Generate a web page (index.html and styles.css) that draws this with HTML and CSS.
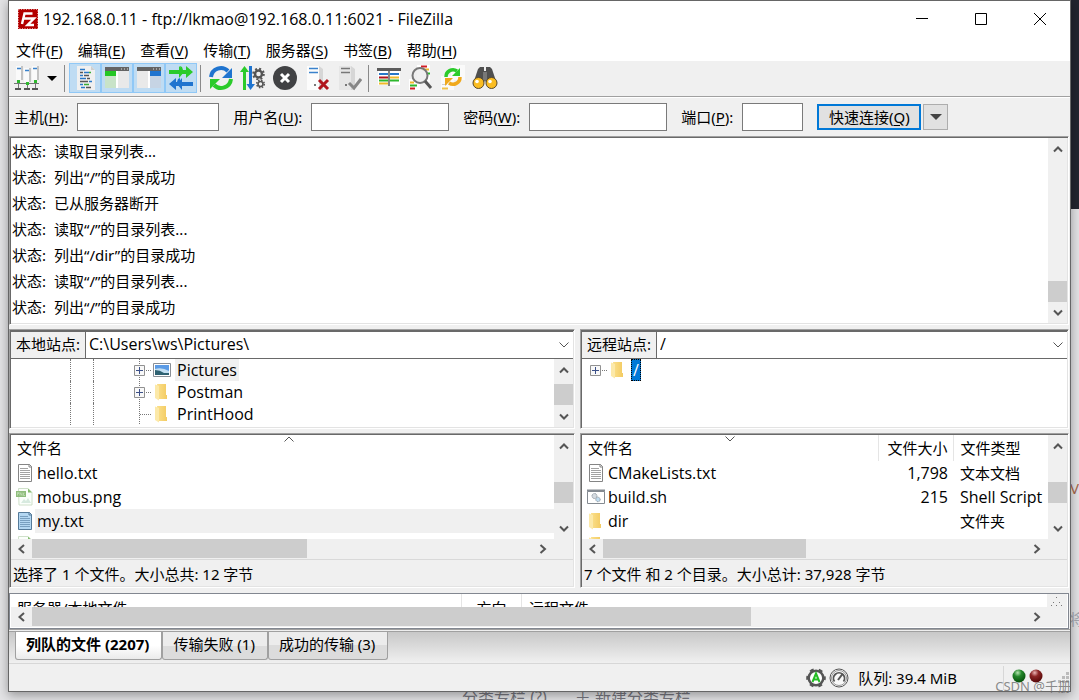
FILE: index.html
```html
<!DOCTYPE html>
<html lang="zh-CN">
<head>
    <meta charset="UTF-8">
    <meta name="viewport" content="width=device-width, initial-scale=1.0">
    <title>FileZilla</title>
    <link rel="stylesheet" href="styles.css">
</head>
<body>
    <!-- Shared icons -->
    <svg class="sprite" aria-hidden="true">
        <linearGradient id="folderFill" x1="0" x2="1"><stop offset="0" stop-color="#fbe08c"/><stop offset="1" stop-color="#f3cb62"/></linearGradient>
        <radialGradient id="ledGreen" cx=".4" cy=".25" r=".75"><stop offset="0" stop-color="#b5e5b0"/><stop offset=".4" stop-color="#23862a"/><stop offset="1" stop-color="#064f0b"/></radialGradient>
        <radialGradient id="ledRed" cx=".4" cy=".25" r=".75"><stop offset="0" stop-color="#eab5b5"/><stop offset=".4" stop-color="#8c2626"/><stop offset="1" stop-color="#550808"/></radialGradient>
        <symbol id="arrow-up" viewBox="0 0 10 10"><path d="M1 7.5 5 3.5 9 7.5" fill="none" stroke="#555" stroke-width="2"/></symbol>
        <symbol id="arrow-down" viewBox="0 0 10 10"><path d="M1 2.5 5 6.5 9 2.5" fill="none" stroke="#555" stroke-width="2"/></symbol>
        <symbol id="arrow-left" viewBox="0 0 10 10"><path d="M7 1 2.5 5 7 9" fill="none" stroke="#555" stroke-width="2"/></symbol>
        <symbol id="arrow-right" viewBox="0 0 10 10"><path d="M2.5 1 7 5 2.5 9" fill="none" stroke="#555" stroke-width="2"/></symbol>
        <symbol id="chevron-down" viewBox="0 0 10 6"><path d="M.5.5 5 5 9.5.5" fill="none" stroke="#555"/></symbol>
        <symbol id="chevron-up" viewBox="0 0 10 6"><path d="M.5 5.5 5 1 9.5 5.5" fill="none" stroke="#555"/></symbol>
        <symbol id="folder" viewBox="0 0 18 18"><path d="M4 1h9v11h1v4H5z" fill="url(#folderFill)"/><path d="M2 1.5 6 3v14.500L2 15z" fill="#fce9a9"/></symbol>
        <symbol id="text-file" viewBox="0 0 18 20"><path d="M2.500 1.500h11l2 2v15h-13z" fill="#fff" stroke="#858585"/><path d="M13 1v3h3" fill="none" stroke="#858585"/><path d="M4 5.500h8M4 7.500h10M4 9.500h10M4 11.500h10M4 13.500h10M4 15.500h10" stroke="#a2a2a2"/></symbol>
        <symbol id="text-file-on" viewBox="0 0 18 20"><path d="M2.500 1.500h11l2 2v15h-13z" fill="#b3d7f2" stroke="#557a99"/><path d="M13 1v3h3" fill="none" stroke="#557a99"/><path d="M4 5.500h8M4 7.500h10M4 9.500h10M4 11.500h10M4 13.500h10M4 15.500h10" stroke="#789fbf"/></symbol>
        <symbol id="png-file" viewBox="0 0 18 20"><path d="M2.500 1.500h9.500l4 4V18H3z" fill="#fbfffb" stroke="#cfe0ca"/><path d="M12 1.500v4h4z" fill="#85bb6e"/><path d="M0 4h10v6H0z" fill="#8fbd7c"/><path d="M1.500 8.500v-3h1v1.500M4 8.500v-3l2 3v-3M8.500 6h-1v2.500h1.500" fill="none" stroke="#c3dfb8" stroke-width=".8"/><path d="m5 16 3-4 2 2 2-3 3 5z" fill="#d7eadf"/></symbol>
        <symbol id="plus-box" viewBox="0 0 24 22"><path d="M.5.5h10v10H.5z" transform="translate(6 6)" fill="#f8f8f8" stroke="#919191"/><path d="M8 11.500h7M11.500 8v7" stroke="#3c5088"/><path d="M18 11.500h6" stroke="#777" stroke-dasharray="1 1"/></symbol>
    </svg>

    <div class="page-behind">
        <div class="dark-strip"></div>
        <span class="side-text">VI</span>
        <span class="side-text side-text-low">将</span>
        <p class="behind-line"><span>分类专栏 (?)</span><span>＋ 新建分类专栏</span></p>
    </div>

    <main class="window">
        <header class="title-bar">
            <svg class="app-icon" viewBox="0 0 20 20"><path d="M0 0h20v20H0z" fill="#b30000"/><path d="M.5.5h19v19H.5z" fill="none" stroke="#fff" stroke-dasharray="1 1.500" stroke-opacity=".6"/><path d="M4 15 6.500 4.500h8M5.500 9.500h5M10 9.500h6L9.500 16h6.500" fill="none" stroke="#fff" stroke-width="2.400"/></svg>
            <h1>192.168.0.11 - ftp://lkmao@192.168.0.11:6021 - FileZilla</h1>
            <button class="caption" aria-label="最小化"><svg width="12" height="12"><path d="M0 5.500h12" stroke="#000"/></svg></button>
            <button class="caption" aria-label="最大化"><svg width="12" height="12"><path d="M.5.5h11v11H.5z" fill="none" stroke="#000"/></svg></button>
            <button class="caption" aria-label="关闭"><svg width="12" height="12"><path d="M0 0l12 12M12 0 0 12" stroke="#000"/></svg></button>
        </header>

        <nav class="menu-bar">
            <button>文件(<u>F</u>)</button>
            <button>编辑(<u>E</u>)</button>
            <button>查看(<u>V</u>)</button>
            <button>传输(<u>T</u>)</button>
            <button>服务器(<u>S</u>)</button>
            <button>书签(<u>B</u>)</button>
            <button>帮助(<u>H</u>)</button>
        </nav>

        <div class="toolbar">
            <button class="tool" aria-label="站点管理器">
                <svg width="26" height="26" viewBox="0 0 26 26"><path d="M2 1h5v14H2zM10 3h5v14h-5zM18 1h5v14h-5z" fill="#fafafa"/><path d="M7 1h2v14H7zM15 3h2v14h-2zM23 1h2v14h-2z" fill="#c4c4c4"/><path d="M3 3.500h4M11 5.500h4M19 3.500h4" stroke="#3a82cc" stroke-width="1.500"/><path d="M4.500 15v8M13.500 17v7M21.500 15v8M0 18.500h25" stroke="#777"/><path d="M1 24h6M10 24h6M18 24h6" stroke="#555" stroke-width="2"/><path d="M3 15h3v3H3zM12 17h3v3h-3zM20 15h3v3h-3z" fill="#2eb82e"/></svg>
            </button>
            <button class="tool tool-arrow" aria-label="打开站点列表"><svg width="10" height="5"><path d="M0 0h10L5 5z" fill="#000"/></svg></button>
            <span class="tool-line"></span>
            <button class="tool pressed" aria-label="消息日志">
                <svg width="26" height="26" viewBox="0 0 26 26"><path d="M5 1h14l4 4v20H5z" fill="#f0f0f0"/><path d="M19 1v4h4z" fill="#cfcfcf"/><g stroke-width="1.300"><path d="M8 4.500h5M12 7.500h5M8 10.500h3M8 13.500h6M17 16.500h3M8 19.500h3M9 22.500h4" stroke="#2878c8"/><path d="M8 7.500h3M12 10.500h5M15 13.500h3M8 16.500h8M14 22.500h5" stroke="#555"/><path d="M17 7.500h2M12 19.500h5" stroke="#37ad37"/></g></svg>
            </button>
            <button class="tool pressed" aria-label="本地目录树">
                <svg width="26" height="26" viewBox="0 0 26 26"><path d="M1 2h24v4H1z" fill="#646464"/><path d="M17 4h1M20 4h1M23 4h1" stroke="#ddd"/><path d="M1 6h11v5H1z" fill="#24c724"/><path d="M1 11h11v12H1z" fill="#c8e3c8"/><path d="M12 6h2v17h-2z" fill="#fff"/><path d="M14 6h11v17H14z" fill="#e9e9e9"/></svg>
            </button>
            <button class="tool pressed" aria-label="远程目录树">
                <svg width="26" height="26" viewBox="0 0 26 26"><path d="M1 2h24v4H1z" fill="#646464"/><path d="M17 4h1M20 4h1M23 4h1" stroke="#ddd"/><path d="M1 6h11v17H1z" fill="#e9e9e9"/><path d="M12 6h2v17h-2z" fill="#fff"/><path d="M14 6h11v5H14z" fill="#1f74cf"/><path d="M14 11h11v12H14z" fill="#c6d4e4"/></svg>
            </button>
            <button class="tool pressed" aria-label="传输队列">
                <svg width="26" height="26" viewBox="0 0 26 26"><path d="M1 5h10V1l5 6-5 6V9H1zM13 5l-1-4 2 1 1 3h3V1l7 6-7 6V9h-4z" fill="#2bcb2b"/><path d="M25 17H14v-4l-5 6 5 6v-4h11zM12 17v-4l-2 1-1 3H8v-4l-7 6 7 6v-4h3z" fill="#1f74cf"/></svg>
            </button>
            <span class="tool-line"></span>
            <button class="tool" aria-label="刷新">
                <svg width="26" height="26" viewBox="0 0 26 26"><path d="M3 12a10 10 0 0 1 17-6" fill="none" stroke="#1f74cf" stroke-width="4"/><path d="M24 3v10H14z" fill="#1f74cf"/><path d="M23 14a10 10 0 0 1-17 6" fill="none" stroke="#2bcb2b" stroke-width="4"/><path d="M2 24V14h10z" fill="#2bcb2b"/></svg>
            </button>
            <button class="tool" aria-label="处理队列">
                <svg width="26" height="26" viewBox="0 0 26 26"><path d="M4.500 25V5" stroke-width="3" stroke="#2bcb2b"/><path d="M0 7 4.500 1 9 7z" fill="#2bcb2b"/><path d="M10.500 1v20" stroke-width="3" stroke="#1f74cf"/><path d="M6.500 19 10.500 25 15 19z" fill="#1f74cf"/><circle cx="18.500" cy="9" r="3.500" fill="none" stroke="#555" stroke-width="2.500"/><circle cx="18.500" cy="9" r="5.300" fill="none" stroke="#555" stroke-width="2" stroke-dasharray="2 2.160"/><circle cx="20.500" cy="19" r="2.500" fill="none" stroke="#555" stroke-width="1.600"/><circle cx="20.500" cy="19" r="3.800" fill="none" stroke="#555" stroke-width="1.500" stroke-dasharray="1.500 1.500"/></svg>
            </button>
            <button class="tool" aria-label="取消">
                <svg width="26" height="26" viewBox="0 0 26 26"><circle cx="13" cy="13" r="12" fill="#414244"/><path d="m9 9 8 8M17 9l-8 8" stroke="#fff" stroke-width="3"/></svg>
            </button>
            <button class="tool" aria-label="断开">
                <svg width="26" height="26" viewBox="0 0 26 26"><path d="M3 1h12v24H3z" fill="#fcfcfc"/><path d="M15 1l4 3v21h-4z" fill="#d6d6d6"/><path d="M5 3.500h9M5 7.500h9" stroke="#3a82cc" stroke-width="1.500"/><path d="M10 19h2v2h-2z" fill="#777"/><path d="m15 15 9 9M24 15l-9 9" stroke="#b0151d" stroke-width="3"/></svg>
            </button>
            <button class="tool" aria-label="重新连接">
                <svg width="26" height="26" viewBox="0 0 26 26"><path d="M3 1h12v24H3z" fill="#e6e6e6"/><path d="M15 1l4 3v21h-4z" fill="#d6d6d6"/><path d="M5 3.500h9M5 7.500h9" stroke="#777" stroke-width="1.500"/><path d="M9 19h2v2H9z" fill="#777"/><path d="m13 18 5 5 7-9" fill="none" stroke="#868686" stroke-width="3"/></svg>
            </button>
            <span class="tool-line"></span>
            <button class="tool" aria-label="目录列表过滤器">
                <svg width="26" height="26" viewBox="0 0 26 26"><path d="M2 6h22v14H2z" fill="#fff"/><path d="M1 3h24v3H1z" fill="#5c5c5c"/><path d="M3 9h9M14 9h9" stroke="#2878c8" stroke-width="2"/><path d="M3 15.500h9M14 15.500h9" stroke="#2eb82e" stroke-width="2"/><path d="M3 12.500h9" stroke="#b0151d" stroke-width="2"/><path d="M3 18.500h9M14 12.500h9" stroke="#f0b929" stroke-width="2"/><path d="M13 5v16" stroke="#5c5c5c" stroke-width="1.500"/></svg>
            </button>
            <button class="tool" aria-label="目录比较">
                <svg width="26" height="26" viewBox="0 0 26 26"><path d="M9 0h13v17H9zM1 14h11v11H1z" fill="#fff"/><path d="M13 1.500h6" stroke="#d21f26" stroke-width="2"/><path d="M14 4.500h7" stroke="#f0b929" stroke-width="2"/><path d="M18 8.500h4" stroke="#2eb82e" stroke-width="2"/><path d="M2 17.500h4" stroke="#f0b929" stroke-width="2"/><path d="M2 20.500h7" stroke="#2eb82e" stroke-width="2"/><path d="M2 23.500h5" stroke="#d21f26" stroke-width="2"/><circle cx="12" cy="10.500" r="7.500" fill="#ededed" fill-opacity=".85" stroke="#777" stroke-width="2"/><path d="m17 16 6 7" stroke="#555" stroke-width="3"/></svg>
            </button>
            <button class="tool" aria-label="同步浏览">
                <svg width="26" height="26" viewBox="0 0 26 26"><path d="M11 0h14v15H11zM1 11h13v14H1z" fill="#fafafa"/><path d="M2 19.500h5M15 19.500h2" stroke="#ccc"/><path d="M2 23.500h6" stroke="#f0c24a" stroke-width="2"/><path d="M6 12a7 7 0 0 1 11-6" fill="none" stroke="#2bcb2b" stroke-width="3.500"/><path d="M20 3v8h-8z" fill="#2bcb2b"/><path d="M20 12a7 7 0 0 1-11 6" fill="none" stroke="#f0a91c" stroke-width="3.500"/><path d="M5 21v-8h8z" fill="#f0a91c"/></svg>
            </button>
            <button class="tool" aria-label="查找文件">
                <svg width="26" height="26" viewBox="0 0 26 26"><path d="M8 2h4v4h2V2h4l2 2 4 12-9 4-2-5-2 5-9-4L6 4z" fill="#4f4f4f"/><path d="M11 7h4v8h-4z" fill="#777"/><circle cx="6.500" cy="18" r="5.500" fill="#fbbd22" stroke="#5a4a2c"/><circle cx="19.500" cy="18" r="5.500" fill="#fbbd22" stroke="#5a4a2c"/><circle cx="5" cy="16.500" r="1.800" fill="#fff"/><circle cx="18" cy="16.500" r="1.800" fill="#fff"/></svg>
            </button>
        </div>

        <form class="quick-connect">
            <label for="host">主机(<u>H</u>):</label>
            <input type="text" id="host" class="host">
            <label for="user">用户名(<u>U</u>):</label>
            <input type="text" id="user">
            <label for="pass">密码(<u>W</u>):</label>
            <input type="password" id="pass">
            <label for="port">端口(<u>P</u>):</label>
            <input type="text" id="port" class="port">
            <button type="button" class="connect">快速连接(<u>Q</u>)</button>
            <button type="button" class="history" aria-label="历史记录"><svg width="12" height="6"><path d="M0 0h12L6 6z" fill="#444"/></svg></button>
        </form>

        <section class="pane log">
            <dl>
                <dt>状态:</dt><dd>读取目录列表...</dd>
                <dt>状态:</dt><dd>列出“/”的目录成功</dd>
                <dt>状态:</dt><dd>已从服务器断开</dd>
                <dt>状态:</dt><dd>读取“/”的目录列表...</dd>
                <dt>状态:</dt><dd>列出“/dir”的目录成功</dd>
                <dt>状态:</dt><dd>读取“/”的目录列表...</dd>
                <dt>状态:</dt><dd>列出“/”的目录成功</dd>
            </dl>
            <div class="vscroll at-end">
                <button aria-label="向上"><svg><use href="#arrow-up"/></svg></button>
                <div class="track"><div class="thumb"></div></div>
                <button aria-label="向下"><svg><use href="#arrow-down"/></svg></button>
            </div>
        </section>

        <div class="sites">
            <section class="pane site">
                <div class="site-path">
                    <label for="localPath">本地站点:</label>
                    <div class="combo">
                        <select id="localPath"><option>C:\Users\ws\Pictures\</option></select>
                        <svg><use href="#chevron-down"/></svg>
                    </div>
                </div>
                <div class="pane-body">
                    <ul class="tree local-tree">
                        <li><i class="guide"></i><i class="guide guide-near"></i><span class="node line-full"><svg><use href="#plus-box"/></svg></span>
                            <svg class="tree-icon" viewBox="0 0 18 18"><path d="M.5 2.500h17v13H.5z" fill="#fff" stroke="#8a8f96"/><path d="M2 4h14v10H2z" fill="#5b9be6"/><path d="M2 8q7-2 14 2v4H2z" fill="#c3dff2"/><path d="M2 9q5 0 9 3h5v2H2z" fill="#2f6272"/></svg>
                            <span class="tree-name current">Pictures</span></li>
                        <li><i class="guide"></i><i class="guide guide-near"></i><span class="node line-full"><svg><use href="#plus-box"/></svg></span><svg class="tree-icon"><use href="#folder"/></svg><span class="tree-name">Postman</span></li>
                        <li><i class="guide"></i><i class="guide guide-near"></i><span class="node line-full"><svg viewBox="0 0 24 22"><path d="M12 11.500h12" stroke="#777" stroke-dasharray="1 1"/></svg></span><svg class="tree-icon"><use href="#folder"/></svg><span class="tree-name">PrintHood</span></li>
                    </ul>
                    <div class="vscroll tree-scroll">
                        <button aria-label="向上"><svg><use href="#arrow-up"/></svg></button>
                        <div class="track"><div class="thumb"></div></div>
                        <button aria-label="向下"><svg><use href="#arrow-down"/></svg></button>
                    </div>
                </div>
            </section>

            <section class="pane site">
                <div class="site-path">
                    <label for="remotePath">远程站点:</label>
                    <div class="combo">
                        <select id="remotePath"><option>/</option></select>
                        <svg><use href="#chevron-down"/></svg>
                    </div>
                </div>
                <div class="pane-body">
                    <ul class="tree remote-tree">
                        <li><span class="node"><svg><use href="#plus-box"/></svg></span><svg class="tree-icon"><use href="#folder"/></svg><span class="tree-name selected">/</span></li>
                    </ul>
                </div>
            </section>

            <section class="pane files">
                <div class="pane-body">
                    <div class="list">
                        <table class="local-files">
                            <thead><tr><th><svg class="sort"><use href="#chevron-up"/></svg>文件名</th></tr></thead>
                            <tbody>
                                <tr><td><div class="file"><svg><use href="#text-file"/></svg><span>hello.txt</span></div></td></tr>
                                <tr><td><div class="file"><svg><use href="#png-file"/></svg><span>mobus.png</span></div></td></tr>
                                <tr><td><div class="file current"><svg><use href="#text-file-on"/></svg><span>my.txt</span></div></td></tr>
                                <tr><td><div class="file"><svg><use href="#png-file"/></svg></div></td></tr>
                            </tbody>
                        </table>
                    </div>
                    <div class="vscroll list-scroll">
                        <button aria-label="向上"><svg><use href="#arrow-up"/></svg></button>
                        <div class="track"><div class="thumb"></div></div>
                        <button aria-label="向下"><svg><use href="#arrow-down"/></svg></button>
                    </div>
                </div>
                <div class="hscroll">
                    <button aria-label="向左"><svg><use href="#arrow-left"/></svg></button>
                    <div class="track"><div class="thumb" style="width: 55%"></div></div>
                    <button aria-label="向右"><svg><use href="#arrow-right"/></svg></button>
                </div>
                <p class="summary">选择了 1 个文件。大小总共: 12 字节</p>
            </section>

            <section class="pane files">
                <div class="pane-body">
                    <div class="list">
                        <table class="remote-files">
                            <thead><tr><th><svg class="sort"><use href="#chevron-down"/></svg>文件名</th><th class="size">文件大小</th><th class="type">文件类型</th></tr></thead>
                            <tbody>
                                <tr><td><div class="file"><svg><use href="#text-file"/></svg><span>CMakeLists.txt</span></div></td><td class="size latin">1,798</td><td class="type">文本文档</td></tr>
                                <tr><td><div class="file"><svg viewBox="0 0 18 20"><path d="M.5 4.500h17v12H.5z" fill="#fff" stroke="#848a91"/><path d="M0 3.500h18" stroke="#848a91" stroke-width="2"/><circle cx="7.500" cy="9" r="2.500" fill="#d5dbe1" stroke="#8b949d" stroke-dasharray="1 .5"/><circle cx="11" cy="12.500" r="2.200" fill="#bfdcf0" stroke="#8b949d" stroke-dasharray="1 .5"/></svg><span>build.sh</span></div></td><td class="size latin">215</td><td class="type latin">Shell Script</td></tr>
                                <tr><td><div class="file"><svg><use href="#folder"/></svg><span>dir</span></div></td><td class="size"></td><td class="type">文件夹</td></tr>
                                <tr><td><div class="file"><svg><use href="#folder"/></svg></div></td><td class="size"></td><td class="type"></td></tr>
                            </tbody>
                        </table>
                    </div>
                    <div class="vscroll list-scroll">
                        <button aria-label="向上"><svg><use href="#arrow-up"/></svg></button>
                        <div class="track"><div class="thumb"></div></div>
                        <button aria-label="向下"><svg><use href="#arrow-down"/></svg></button>
                    </div>
                </div>
                <div class="hscroll">
                    <button aria-label="向左"><svg><use href="#arrow-left"/></svg></button>
                    <div class="track"><div class="thumb" style="width: 48%"></div></div>
                    <button aria-label="向右"><svg><use href="#arrow-right"/></svg></button>
                </div>
                <p class="summary">7 个文件 和 2 个目录。大小总计: 37,928 字节</p>
            </section>
        </div>

        <section class="queue">
            <div class="queue-head">
                <span class="queue-server">服务器/本地文件</span>
                <span class="queue-way">方向</span>
                <span class="queue-remote">远程文件</span>
                <svg class="queue-corner" width="20" height="13"><path d="M9 3h1v1H9zM6 8h1v1H6zM12 8h1v1h-1zM4 11h1v1H4zM9 11h1v1H9zM14 11h1v1h-1z" fill="#777"/></svg>
            </div>
            <div class="hscroll">
                <button aria-label="向左"><svg><use href="#arrow-left"/></svg></button>
                <div class="track"><div class="thumb" style="width: 72.3%"></div></div>
                <button aria-label="向右"><svg><use href="#arrow-right"/></svg></button>
            </div>
        </section>

        <div class="tabs">
            <button class="tab active">列队的文件 (2207)</button>
            <button class="tab">传输失败 (1)</button>
            <button class="tab">成功的传输 (3)</button>
        </div>

        <footer class="status-bar">
            <svg width="20" height="20" viewBox="0 0 20 20"><circle cx="10" cy="10" r="7.300" fill="#fff" stroke="#555" stroke-width="2.500"/><circle cx="10" cy="10" r="8.800" fill="none" stroke="#555" stroke-width="2" stroke-dasharray="4 5.210" stroke-dashoffset="2"/><path d="m6.500 14 3.500-8.500 3.500 8.500M8 11.500h4" fill="none" stroke="#24bd24" stroke-width="2"/></svg>
            <svg width="20" height="20" viewBox="0 0 20 20"><circle cx="10" cy="10" r="9" fill="#f8f8f8" stroke="#555"/><circle cx="10" cy="10" r="7.500" fill="none" stroke="#999"/><path d="M5.500 13.500A5.500 5.500 0 1 1 14.500 13.500" fill="none" stroke="#555" stroke-width="1.800"/><path d="m9 12 4.500-6" stroke="#555" stroke-width="2"/></svg>
            <span class="queue-size">队列: 39.4 MiB</span>
            <div class="lights">
                <svg width="14" height="14"><circle cx="7" cy="7" r="6.500" fill="url(#ledGreen)"/></svg>
                <svg width="14" height="14"><circle cx="7" cy="7" r="6.500" fill="url(#ledRed)"/></svg>
            </div>
            <svg class="grip" width="12" height="12"><path d="M9 0h3v3H9zM5 4h3v3H5zM9 4h3v3H9zM1 8h3v3H1zM5 8h3v3H5zM9 8h3v3H9z" fill="#bbb"/></svg>
        </footer>
    </main>
    <span class="watermark">CSDN @千册</span>
</body>
</html>
```
FILE: styles.css
```css
* {
    box-sizing: border-box;
}
body {
    margin: 0;
    padding: 0 8px 8px;
    min-height: 100vh;
    position: relative;
    overflow: hidden;
    background: #e3e3e5;
    color: #000;
    font: 15px/22px "Noto Sans", "Noto Sans CJK SC", sans-serif;
}
h1, p, dl, dd, ul {
    margin: 0;
    padding: 0;
}
button, input, select {
    font: inherit;
    color: inherit;
    margin: 0;
    padding: 0;
    border: 0;
    border-radius: 0;
    background: none;
}
svg {
    display: block;
    flex: none;
}
u {
    text-underline-offset: 2px;
}
.sprite {
    position: absolute;
    width: 0;
    height: 0;
}

/* page behind the window */
.page-behind {
    position: absolute;
    inset: 0;
    color: #77777f;
    overflow: hidden;
}
.dark-strip {
    position: absolute;
    right: 0;
    top: 0;
    width: 50%;
    height: 209px;
    background: #23252f;
}
.side-text {
    position: absolute;
    right: -5px;
    top: 477px;
    color: #a8684c;
}
.side-text-low {
    top: 608px;
    color: #a5a8b2;
}
.behind-line {
    position: absolute;
    left: 462px;
    bottom: -8px;
    display: flex;
    gap: 28px;
    font-size: 16px;
}

/* window */
.window {
    position: relative;
    border: 1px solid #666;
    background: #f0f0f0;
    box-shadow: 0 3px 10px rgba(0, 0, 0, 0.35);
}
.title-bar {
    display: flex;
    align-items: center;
    height: 36px;
    padding: 0 1px 0 9px;
    background: #fff;
}
.app-icon {
    width: 20px;
    height: 20px;
    margin-right: 5px;
}
h1, .combo select, .tree-name, .file, .latin {
    font-family: "Open Sans", "Noto Sans CJK SC", sans-serif;
    font-size: 16px;
    font-weight: 400;
}
h1 {
    flex: 1;
}
.caption {
    display: flex;
    align-items: center;
    justify-content: center;
    width: 59px;
    height: 36px;
}
.menu-bar {
    display: flex;
    gap: 15px;
    height: 24px;
    padding: 2px 0 0 7px;
    background: #fff;
}
.toolbar {
    display: flex;
    align-items: center;
    height: 36px;
    padding: 0 2px 1px;
    border-bottom: 1px solid #a0a0a0;
}
.tool {
    display: flex;
    align-items: center;
    justify-content: center;
    width: 32px;
    height: 30px;
}
.tool-arrow {
    width: 18px;
}
.pressed {
    background: #bfdcf3;
    border: 1px solid #90c8f6;
}
.tool-line {
    width: 1px;
    height: 27px;
    margin: 0 4px 0 3px;
    background: #8a8a8a;
}
.quick-connect {
    display: flex;
    align-items: center;
    height: 39px;
    padding: 0 0 1px 5px;
    border-top: 1px solid #fff;
}
.quick-connect input {
    width: 138px;
    height: 28px;
    margin: 0 14px 0 9px;
    padding: 0 4px;
    border: 1px solid #7a7a7a;
    background: #fff;
}
.quick-connect .host {
    width: 142px;
}
.quick-connect .port {
    width: 61px;
}
.connect {
    width: 104px;
    height: 26px;
    border: 2px solid #0078d7;
    background: #e1e1e1;
}
.history {
    display: flex;
    align-items: center;
    justify-content: center;
    width: 25px;
    height: 26px;
    margin-left: 2px;
    border: 1px solid #adadad;
    background: #e1e1e1;
}

/* sunken panes */
.pane {
    min-width: 0;
    border: 1px solid;
    border-color: #a0a0a0 #fff #fff #a0a0a0;
    box-shadow: inset 1px 1px #696969, inset -1px -1px #e3e3e3;
    padding: 1px;
}
.log {
    display: flex;
    background: #fff;
    height: 189px;
    margin: 0 1px 4px 0;
}
.log dl {
    flex: 1;
    display: grid;
    grid-template-columns: 42px 1fr;
    grid-auto-rows: 26px;
    line-height: 26px;
    padding-left: 1px;
}
.sites {
    display: grid;
    grid-template-columns: 566fr 489fr;
    gap: 4px 5px;
    margin-right: 1px;
}
.site {
    height: 100px;
    background: #fff;
}
.site-path {
    display: flex;
    height: 28px;
    border-top: 1px solid #696969;
    border-bottom: 1px solid #696969;
}
.site-path label {
    padding: 0 5px;
    line-height: 24px;
    border-right: 1px solid #696969;
    background: #f0f0f0;
}
.combo {
    flex: 1;
    display: grid;
    align-items: center;
}
.combo select, .combo svg {
    grid-area: 1 / 1;
}
.combo select {
    appearance: none;
    height: 26px;
    padding: 0 0 2px 3px;
}
.combo svg {
    width: 10px;
    height: 6px;
    justify-self: end;
    margin-right: 4px;
    pointer-events: none;
}
.pane-body {
    display: flex;
    height: 68px;
}
.tree {
    flex: 1;
    list-style: none;
}
.tree li {
    display: flex;
    align-items: center;
    height: 22px;
}
.remote-tree {
    padding-left: 2px;
}
.guide {
    width: 60px;
    height: 22px;
    border-right: 1px dotted #777;
}
.guide-near {
    width: 23px;
    margin-right: 34px;
}
.node svg {
    width: 24px;
    height: 22px;
}
.line-full {
    background: linear-gradient(#777 50%, transparent 50%) 11px 0 / 1px 2px repeat-y;
}
.tree-icon {
    width: 18px;
    height: 18px;
    margin: 0 4px 0 1px;
}
.tree-name {
    padding: 0 2px;
}
.current {
    background: #f0f0f0;
}
.tree .selected {
    color: #fff;
    background: #0078d7;
    outline: 1px dotted #000;
    outline-offset: -1px;
}

/* scroll bars */
.vscroll, .hscroll {
    display: flex;
    background: #f0f0f0;
}
.vscroll {
    flex-direction: column;
    width: 19px;
}
.hscroll {
    height: 20px;
    padding: 0 20px 1px 0;
}
.vscroll button, .hscroll button {
    display: flex;
    align-items: center;
    justify-content: center;
    width: 21px;
    height: 19px;
}
.vscroll button {
    width: 19px;
    height: 21px;
}
.vscroll button svg, .hscroll button svg {
    width: 10px;
    height: 10px;
}
.track {
    flex: 1;
}
.thumb {
    height: 19px;
    background: #cdcdcd;
}
.vscroll .thumb {
    height: 21px;
}
.at-end .track {
    display: flex;
    flex-direction: column;
    justify-content: flex-end;
}
.tree-scroll .track {
    padding-top: 4px;
}
.list-scroll .track {
    padding-top: 26px;
}

/* file lists */
.files {
    height: 155px;
}
.files .pane-body {
    height: 104px;
}
.list {
    flex: 1;
    min-width: 0;
    overflow: hidden;
    background: #fff;
}
table {
    width: 100%;
    table-layout: fixed;
    border-collapse: collapse;
}
.local-files {
    width: calc(100% + 12px);
}
th {
    position: relative;
    height: 26px;
    padding: 0 0 0 6px;
    font-weight: 400;
    text-align: left;
}
.sort {
    position: absolute;
    top: 1px;
    left: calc(50% - 5px);
    width: 10px;
    height: 6px;
}
td {
    height: 24px;
    padding: 0;
}
.size {
    width: 75px;
    padding-right: 5px;
    text-align: right;
}
.type {
    width: 95px;
    padding-left: 7px;
}
th.size, th.type {
    border-left: 1px solid #e5e5e5;
}
.file {
    display: flex;
    align-items: center;
    height: 24px;
    padding-left: 5px;
}
.file svg {
    width: 18px;
    height: 20px;
    margin-right: 1px;
}
.file span {
    padding-left: 2px;
}
.file.current {
    background: linear-gradient(90deg, #fff 24px, #f0f0f0 24px);
}
.summary {
    height: 28px;
    padding-left: 2px;
    line-height: 28px;
    border-top: 1px solid #d9d9d9;
}

/* queue */
.queue {
    margin: 5px 1px 0 0;
    padding: 0 1px 1px;
    border: 1px solid #828790;
    background: #fff;
}
.queue-head {
    display: flex;
    height: 13px;
    line-height: 28px;
    overflow: hidden;
}
.queue-server {
    width: 451px;
    padding-left: 6px;
    border-right: 1px solid #e5e5e5;
}
.queue-way {
    width: 60px;
    text-align: center;
    border-right: 1px solid #e5e5e5;
}
.queue-remote {
    flex: 1;
    padding-left: 7px;
}
.queue-corner {
    background: #f0f0f0;
}
.tabs {
    display: flex;
    height: 35px;
    padding-left: 6px;
    border-top: 3px double #a0a0a0;
    border-bottom: 1px solid #d7d7d7;
    background: linear-gradient(#c8c8c8, #f0f0f0);
}
.tab {
    height: 28px;
    padding: 0 12px 3px 10px;
    border: 1px solid #a0a0a0;
    border-top: 0;
    border-radius: 0 0 3px 3px;
    background: linear-gradient(#ececec 50%, #dcdcdc 50%);
}
.tab.active {
    font-weight: 700;
    background: linear-gradient(#fff 50%, #ebebeb);
}
.status-bar {
    display: flex;
    align-items: center;
    justify-content: flex-end;
    height: 27px;
}
.status-bar svg {
    margin-right: 3px;
}
.queue-size {
    margin: 0 46px 0 6px;
}
.lights {
    display: flex;
    height: 24px;
    padding: 0 0 4px 8px;
    align-items: center;
    border-left: 1px solid #d7d7d7;
}
.status-bar .grip {
    margin: 0 1px 0 11px;
}
.watermark {
    position: absolute;
    right: 8px;
    bottom: 5px;
    color: rgba(110, 110, 110, 0.8);
    font-size: 13px;
    line-height: 18px;
}
```
